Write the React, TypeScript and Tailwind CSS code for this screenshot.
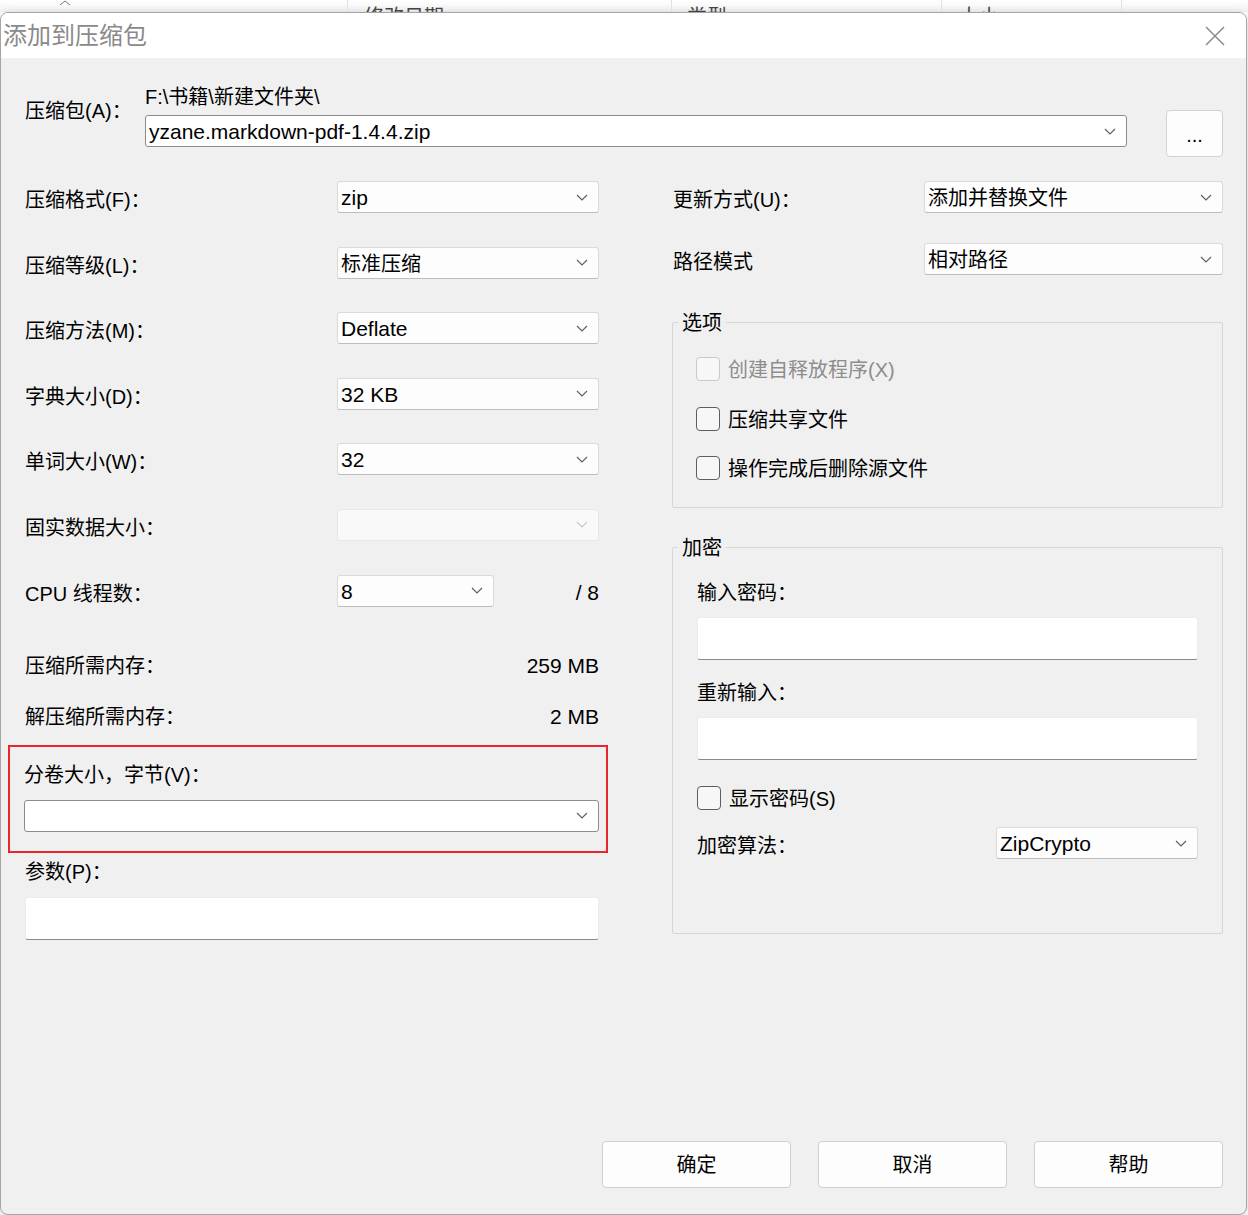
import React from 'react';

type ComboProps = {
  value?: string;
  variant?: 'list' | 'edit' | 'disabled';
  cjk?: boolean;
  className?: string;
};

function Chevron({ light }: { light?: boolean }) {
  return (
    <svg width="12" height="7" viewBox="0 0 12 7" className="shrink-0">
      <path d="M1 1l5 5 5-5" fill="none" stroke={light ? '#c8c8c8' : '#5c5c5c'} strokeWidth="1.1" />
    </svg>
  );
}

function Combo({ value = '', variant = 'list', cjk, className = '' }: ComboProps) {
  const look =
    variant === 'edit'
      ? 'border-[#8c8c8c] bg-white'
      : variant === 'disabled'
        ? 'border-[#e8e8e8] bg-[#f9f9f9]'
        : 'border-[#dadada] border-b-[#bdbdbd] bg-[#fdfdfd]';
  return (
    <div className={`flex h-[32px] items-center justify-between rounded-[3px] border pl-[3px] pr-[10px] ${look} ${className}`}>
      <span className={cjk ? 'pt-[2px] text-[20px] leading-[24px]' : 'pt-[2px] text-[21px] leading-[24px]'}>{value}</span>
      <Chevron light={variant === 'disabled'} />
    </div>
  );
}

function TextInput() {
  return <div className="h-[43px] w-full rounded-[3px] border border-[#ececec] border-b-[#8a8a8a] bg-white" />;
}

function Check({ label, disabled }: { label: string; disabled?: boolean }) {
  return (
    <div className="flex h-[24px] items-center gap-[8px]">
      <span
        className={`h-[24px] w-[24px] shrink-0 rounded-[4px] border-[1.5px] ${
          disabled ? 'border-[#c9c9c9] bg-[#f7f7f7]' : 'border-[#5e5e5e] bg-[#f7f7f7]'
        }`}
      />
      <span className={`pt-[2px] text-[20px] leading-[24px] ${disabled ? 'text-[#8d8d8d]' : ''}`}>{label}</span>
    </div>
  );
}

const leftRows: { label: string; value: string; cjk?: boolean; disabled?: boolean }[] = [
  { label: '压缩格式(F)：', value: 'zip' },
  { label: '压缩等级(L)：', value: '标准压缩', cjk: true },
  { label: '压缩方法(M)：', value: 'Deflate' },
  { label: '字典大小(D)：', value: '32 KB' },
  { label: '单词大小(W)：', value: '32' },
  { label: '固实数据大小：', value: '', disabled: true },
];

export default function App() {
  return (
    <div className="h-[1215px] w-[1248px] overflow-hidden bg-white font-['Liberation_Sans','Noto_Sans_CJK_SC',sans-serif] text-[20px] text-black">
      {/* window behind the dialog */}
      <div className="flex h-[12px] overflow-hidden bg-gradient-to-b from-white to-[#f3f3f3] leading-[24px] text-[#444]">
        <div className="w-[347px] pl-[59px]">
          <svg width="12" height="6" viewBox="0 0 12 6">
            <path d="M1 5l5-4 5 4" fill="none" stroke="#777" strokeWidth="1" />
          </svg>
        </div>
        <div className="w-[324px] border-l border-[#e2e2e2] pl-[16px] pt-[5px]">修改日期</div>
        <div className="w-[270px] border-l border-[#e2e2e2] pl-[15px] pt-[5px]">类型</div>
        <div className="w-[180px] border-l border-[#e2e2e2] pl-[17px] pt-[5px]">大小</div>
        <div className="flex-1 border-l border-[#e2e2e2]" />
      </div>

      {/* dialog */}
      <div className="flex h-[1203px] w-[1247px] flex-col overflow-hidden rounded-[8px] border border-[#a5a5a5] bg-[#f0f0f0] shadow-[0_2px_10px_rgba(0,0,0,0.2)]">
        {/* Title bar */}
        <div className="flex h-[45px] shrink-0 items-center justify-between bg-white pl-[2px] pr-[21px]">
          <span className="text-[24px] leading-[28px] text-[#8a8a8a]">添加到压缩包</span>
          <svg width="20" height="20" viewBox="0 0 20 20">
            <path d="M1 1l18 18M19 1L1 19" stroke="#8a8a8a" strokeWidth="1.5" />
          </svg>
        </div>

        {/* Body */}
        <div className="flex flex-1 flex-col pl-[24px] pr-[23px]">
          {/* archive name */}
          <div className="flex pt-[24px]">
            <div className="w-[120px] shrink-0 pt-[17px] leading-[24px]">压缩包(A)：</div>
            <div className="flex flex-1 flex-col">
              <div className="pt-[1px] leading-[28px]">{'F:\\书籍\\新建文件夹\\'}</div>
              <Combo value="yzane.markdown-pdf-1.4.4.zip" variant="edit" className="mt-[4px]" />
            </div>
            <div className="ml-[39px] mt-[28px] flex h-[47px] w-[57px] items-center justify-center rounded-[4px] border border-[#d2d2d2] bg-[#fdfdfd] pt-[3px] text-[20px]">
              ...
            </div>
          </div>

          <div className="mt-[24px] flex">
            {/* Left column */}
            <div className="flex w-[574px] shrink-0 flex-col">
              <div className="flex flex-col gap-[33.6px]">
                {leftRows.map((r) => (
                  <div key={r.label} className="flex h-[32px] items-center">
                    <span className="w-[312px] shrink-0 pt-[6px] leading-[24px]">{r.label}</span>
                    <Combo
                      value={r.value}
                      cjk={r.cjk}
                      variant={r.disabled ? 'disabled' : 'list'}
                      className="flex-1"
                    />
                  </div>
                ))}
                <div className="flex h-[32px] items-center">
                  <span className="w-[312px] shrink-0 pt-[6px] leading-[24px]">CPU 线程数：</span>
                  <Combo value="8" className="w-[157px]" />
                  <span className="flex-1 pt-[4px] text-right text-[21px] leading-[24px]">/ 8</span>
                </div>
              </div>

              <div className="mt-[47px] flex justify-between leading-[24px]">
                <span>压缩所需内存：</span>
                <span className="text-[21px]">259 MB</span>
              </div>
              <div className="mt-[27px] flex justify-between leading-[24px]">
                <span>解压缩所需内存：</span>
                <span className="text-[21px]">2 MB</span>
              </div>

              <div className="-ml-[17px] mt-[16px] w-[600px] border-2 border-[#e8262d] pb-[19px] pl-[14px] pr-[7px] pt-[16px]">
                <div className="leading-[24px]">分卷大小，字节(V)：</div>
                <Combo variant="edit" className="mt-[13px]" />
              </div>

              <div className="mt-[7px] leading-[24px]">参数(P)：</div>
              <div className="mt-[13px]">
                <TextInput />
              </div>
            </div>

            {/* Right column */}
            <div className="ml-[73px] flex flex-1 flex-col">
              <div className="flex h-[32px] items-center">
                <span className="w-[252px] shrink-0 pl-[1px] pt-[6px] leading-[24px]">更新方式(U)：</span>
                <Combo value="添加并替换文件" cjk className="flex-1" />
              </div>
              <div className="mt-[30px] flex h-[32px] items-center">
                <span className="w-[252px] shrink-0 pl-[1px] pt-[6px] leading-[24px]">路径模式</span>
                <Combo value="相对路径" cjk className="flex-1" />
              </div>

              <fieldset className="mt-[34px] rounded-[2px] border border-[#d6d6d6]">
                <legend className="ml-[5px] px-[4px] pt-[2px] leading-[24px]">选项</legend>
                <div className="flex flex-col gap-[25.5px] pb-[27px] pl-[23px] pt-[22px]">
                  <Check label="创建自释放程序(X)" disabled />
                  <Check label="压缩共享文件" />
                  <Check label="操作完成后删除源文件" />
                </div>
              </fieldset>

              <fieldset className="mt-[26px] rounded-[2px] border border-[#d6d6d6]">
                <legend className="ml-[5px] px-[4px] pt-[2px] leading-[24px]">加密</legend>
                <div className="flex flex-col pb-[74px] pl-[24px] pr-[24px] pt-[21px]">
                  <div className="leading-[24px]">输入密码：</div>
                  <div className="mt-[12px]">
                    <TextInput />
                  </div>
                  <div className="mt-[21px] leading-[24px]">重新输入：</div>
                  <div className="mt-[12px]">
                    <TextInput />
                  </div>
                  <div className="mt-[26px]">
                    <Check label="显示密码(S)" />
                  </div>
                  <div className="mt-[17px] flex h-[32px] items-center justify-between">
                    <span className="pt-[5px] leading-[24px]">加密算法：</span>
                    <Combo value="ZipCrypto" className="w-[202px]" />
                  </div>
                </div>
              </fieldset>
            </div>
          </div>

          {/* Buttons */}
          <div className="mt-auto flex justify-end gap-[27px] pb-[26px]">
            {['确定', '取消', '帮助'].map((b) => (
              <div
                key={b}
                className="flex h-[47px] w-[189px] items-center justify-center rounded-[4px] border border-[#d0d0d0] bg-[#fdfdfd] leading-[24px]"
              >
                {b}
              </div>
            ))}
          </div>
        </div>
      </div>
    </div>
  );
}
